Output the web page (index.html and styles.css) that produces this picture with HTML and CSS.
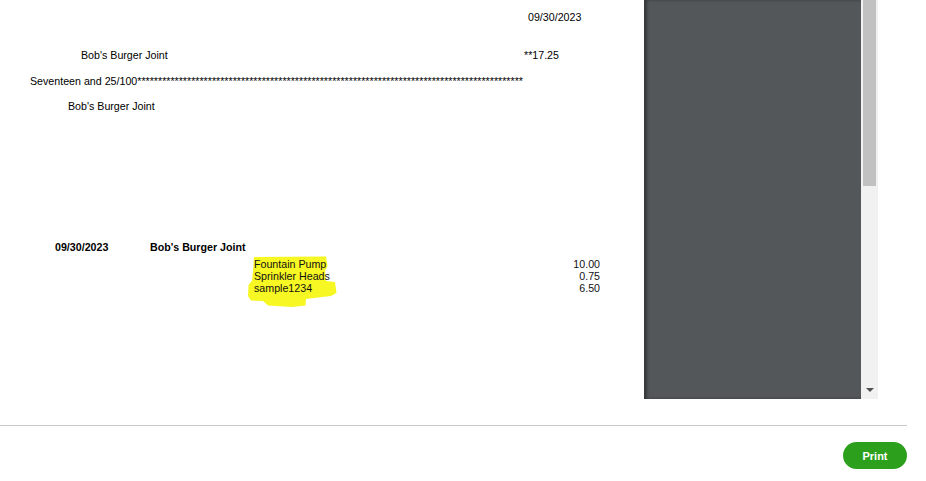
FILE: index.html
```html
<!DOCTYPE html>
<html>
<head>
<meta charset="utf-8">
<link rel="stylesheet" href="styles.css">
</head>
<body>
<div class="app">
  <div class="viewer">
    <div class="page">
      <div class="row date-row">09/30/2023</div>
      <div class="row payee-row"><span class="payee">Bob's Burger Joint</span><span>**17.25</span></div>
      <div class="row words-row">Seventeen and 25/100*********************************************************************************************</div>
      <div class="row memo-row">Bob's Burger Joint</div>
      <div class="row stub-head"><span class="stub-date">09/30/2023</span><span>Bob's Burger Joint</span></div>
      <div class="items">
        <svg class="marker" width="100" height="56" viewBox="244 254 100 56">
          <path d="M254 257 L326 256.5 L327.5 266 L325 271 L326 281 L335 282 L336.5 293 L331 296 L318 297.5 L306 299 L305.5 305.5 L292 307 L268 305.5 L263 301 L251 300.5 L248 296 L248.5 285 L252 280.5 L253 271 Z" fill="#f7f723"/>
        </svg>
        <div class="item"><span>Fountain Pump</span><span>10.00</span></div>
        <div class="item"><span>Sprinkler Heads</span><span>0.75</span></div>
        <div class="item"><span>sample1234</span><span>6.50</span></div>
      </div>
    </div>
    <div class="gutter"></div>
    <div class="scrollbar">
      <div class="thumb"></div>
      <div class="arrow"></div>
    </div>
  </div>
  <div class="footer">
    <button class="print">Print</button>
  </div>
</div>
</body>
</html>
```

FILE: styles.css
```css
* { box-sizing: border-box; }
html, body { margin: 0; padding: 0; background: #fff; }
body { font-family: "Liberation Sans", Arial, sans-serif; }

.app { width: 926px; height: 481px; }

.viewer {
  display: flex;
  width: 878px;
  height: 399px;
}

.page {
  width: 644px;
  background: #fff;
  padding-top: 11px;
  font-size: 8pt;
  line-height: 12px;
  color: #000;
}

.row { white-space: nowrap; height: 12px; }

.date-row { padding-left: 528px; }

.payee-row { margin-top: 26px; display: flex; padding-left: 81px; }
.payee { width: 443px; }

.words-row { margin-top: 14px; padding-left: 30px; }

.memo-row { margin-top: 13px; padding-left: 68px; }

.stub-head { margin-top: 129px; padding-left: 55px; font-weight: bold; display: flex; }
.stub-date { width: 95px; }

.items {
  position: relative;
  margin-top: 5px;
  margin-left: 254px;
  width: 346px;
  color: #111;
}

.marker {
  position: absolute;
  left: -10px;
  top: -4px;
  z-index: 0;
}

.item {
  position: relative;
  z-index: 1;
  display: flex;
  justify-content: space-between;
  height: 12px;
}

.gutter {
  width: 217px;
  background: #53575a;
  box-shadow: inset 3px 0 3px rgba(0, 0, 0, 0.35);
}

.scrollbar {
  width: 17px;
  background: #f1f1f1;
  display: flex;
  flex-direction: column;
}

.thumb {
  height: 186px;
  margin: 0 2px;
  background: #c1c1c1;
}

.arrow {
  margin-top: auto;
  margin-bottom: 7px;
  align-self: center;
  width: 0;
  height: 0;
  border-left: 4px solid transparent;
  border-right: 4px solid transparent;
  border-top: 4px solid #505050;
}

.footer {
  margin-top: 26px;
  margin-right: 19px;
  border-top: 1px solid #c8c8c8;
  display: flex;
  justify-content: flex-end;
  padding-top: 16px;
}

.print {
  width: 64px;
  height: 27px;
  border: none;
  border-radius: 14px;
  background: #2ca01c;
  color: #fff;
  font-family: "Liberation Sans", Arial, sans-serif;
  font-weight: bold;
  font-size: 11px;
  padding: 0;
}
```
